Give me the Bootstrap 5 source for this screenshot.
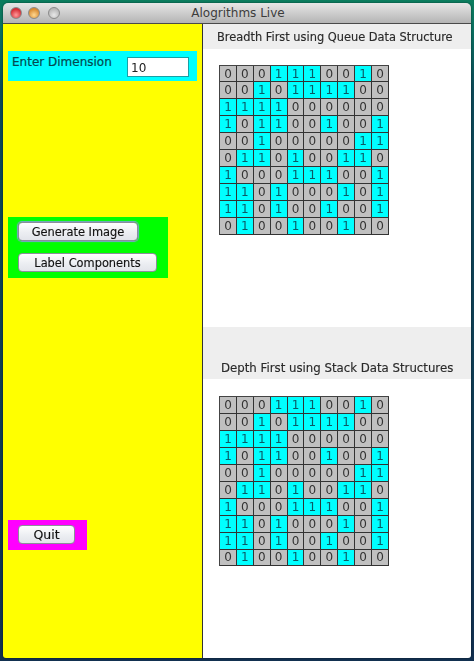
<!DOCTYPE html>
<html lang="en">
<head>
<meta charset="utf-8">
<title>Alogrithms Live</title>
<link href="https://cdn.jsdelivr.net/npm/bootstrap@5.3.0/dist/css/bootstrap.min.css" rel="stylesheet">
<style>
html,body{height:661px;overflow:hidden}
body{background:linear-gradient(180deg,#0b7d5e 0,#0a7060 30px,#0d4a58 90px,#123050 100%);padding:3px;font-family:"DejaVu Sans",sans-serif;font-size:12px;color:#222}
.mac-window{height:655px;border-radius:5px 5px 3px 3px;overflow:hidden;box-shadow:0 0 2px rgba(0,0,0,.6);filter:blur(.3px)}
.mac-title{height:21px;background:linear-gradient(180deg,#e6e6e6,#b4b4b4);border-bottom:1px solid #4a4a4a;padding-left:7px;flex:none}
.mac-title-text{color:#3c3c3c;font-size:12px;flex:1;text-align:center;padding-right:5px;margin-left:-50px}
.light{width:12px;height:12px;border-radius:50%;border:1px solid #8a8a8a;display:block}
.light-r{background:radial-gradient(circle at 50% 70%,#ff9a9a,#d42a32 70%)}
.light-y{background:radial-gradient(circle at 50% 70%,#ffd890,#d88a30 70%)}
.light-g{background:radial-gradient(circle at 50% 70%,#e8e8e8,#b8b8b8 70%)}
.lights{gap:6px;width:50px;padding-left:0}
.light-g{margin-left:2px}
.panes{flex:1;min-height:0}
.left-pane{width:200px;background:#ff0;border-right:1px solid #333;padding:27px 5px 0 5px;flex:none}
.right-pane{flex:1;background:#fff}
.dim-box{background:#0ff;height:30px;padding:3px 8px 0 4px;color:#04484f}
.dim-box span{line-height:14px;padding-top:1px;-webkit-text-stroke:.2px #04484f}
.dim-input{width:62px;height:20px;border:1px solid #19a0a6;background:#fff;font-size:12px;padding:1px 3px 0 3px;line-height:16px;color:#222;margin-top:3px;border-radius:0}
.gen-box{background:#0f0;width:160px;height:61px;margin-top:136px;padding:5px 10px;gap:12px}
.quit-box{background:#f0f;width:79px;height:30px;margin-top:242px;padding:5px 10px}
.mac-btn{background:linear-gradient(180deg,#fff,#eceef2 55%,#e2e4ea);border:1px solid #8c8c9c;border-radius:4px;font-size:11.4px;height:19px;line-height:16px;padding:0;color:#111;text-align:center;display:block;-webkit-text-stroke:.15px #111}
.w-gen{width:120px;box-shadow:0 0 1px 1px #7ba4cc}
.w-lab{width:139px}
.w-quit{width:57px;font-size:12.5px}
.band-a{height:25px;background:#eee;padding:5px 0 0 14px;color:#2a2a2a;font-size:11.4px;-webkit-text-stroke:.15px #2a2a2a}
.band-b{height:52px;background:#eee;padding:33px 0 0 18px;margin-top:92.4px;color:#2a2a2a;font-size:11.75px;-webkit-text-stroke:.15px #2a2a2a}
.bit-grid{display:grid;grid-template-columns:repeat(10,16.9px);grid-auto-rows:16.9px;width:170px;border-top:1px solid #444;border-left:1px solid #444;color:#333;font-size:12px}
.cell{display:flex;align-items:center;justify-content:center;border-right:1px solid #333;border-bottom:1px solid #333;line-height:1}
.cell-0{background:#c0c0c0}
.cell-1{background:#0ff;color:#0b5a66}
.grid-top{margin:15.6px 0 0 16px}
.grid-bot{margin:17.6px 0 0 16px}
</style>
</head>
<body>
<div class="mac-window d-flex flex-column">
  <div class="mac-title d-flex align-items-center">
    <div class="lights d-flex align-items-center">
      <i class="light light-r"></i><i class="light light-y"></i><i class="light light-g"></i>
    </div>
    <div class="mac-title-text">Alogrithms Live</div>
  </div>
  <div class="panes d-flex">
    <div class="left-pane d-flex flex-column">
      <div class="dim-box d-flex justify-content-between align-items-start">
        <span>Enter Dimension</span>
        <input class="dim-input" type="text" value="10" aria-label="Enter Dimension">
      </div>
      <div class="gen-box d-flex flex-column align-items-start">
        <button class="mac-btn w-gen" type="button">Generate Image</button>
        <button class="mac-btn w-lab" type="button">Label Components</button>
      </div>
      <div class="quit-box">
        <button class="mac-btn w-quit" type="button">Quit</button>
      </div>
    </div>
    <div class="right-pane">
      <div class="band-a">Breadth First using Queue Data Structure</div>
      <div class="bit-grid grid-top" id="g1"></div>
      <div class="band-b">Depth First using Stack Data Structures</div>
      <div class="bit-grid grid-bot" id="g2"></div>
    </div>
  </div>
</div>
<script>
var rows=["0001110010","0010111100","1111000000","1011001001","0010000011","0110100110","1000111001","1101000101","1101001001","0100100100"];
["g1","g2"].forEach(function(id){
  var el=document.getElementById(id),h="";
  rows.forEach(function(r){for(var i=0;i<r.length;i++){h+='<div class="cell cell-'+r[i]+'">'+r[i]+'</div>';}});
  el.innerHTML=h;
});
</script>
</body>
</html>
